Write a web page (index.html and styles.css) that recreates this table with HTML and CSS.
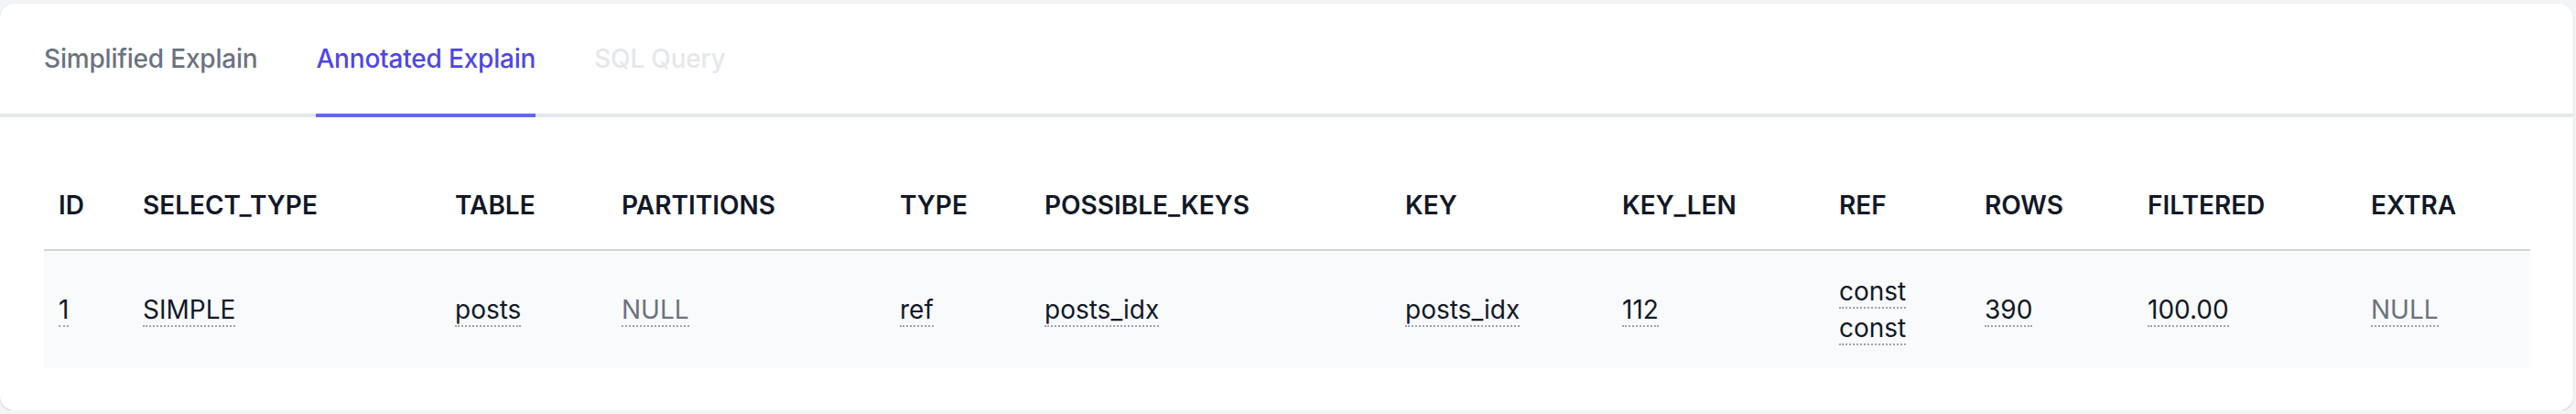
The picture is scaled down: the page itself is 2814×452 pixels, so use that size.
FILE: index.html
```html
<!DOCTYPE html>
<html lang="en">
<head>
<meta charset="utf-8">
<title>Explain</title>
<link rel="stylesheet" href="styles.css">
</head>
<body>
<div class="card">
  <div class="tabbar">
    <nav class="tabs">
      <a class="tab">Simplified Explain</a>
      <a class="tab active">Annotated Explain</a>
      <a class="tab disabled">SQL Query</a>
    </nav>
  </div>
  <div class="panel">
    <table class="explain">
      <colgroup>
        <col class="c-id"><col class="c-select"><col class="c-table"><col class="c-part">
        <col class="c-type"><col class="c-pkeys"><col class="c-key"><col class="c-keylen">
        <col class="c-ref"><col class="c-rows"><col class="c-filt"><col class="c-extra">
      </colgroup>
      <thead>
        <tr>
          <th>ID</th><th>SELECT_TYPE</th><th>TABLE</th><th>PARTITIONS</th>
          <th>TYPE</th><th>POSSIBLE_KEYS</th><th>KEY</th><th>KEY_LEN</th>
          <th>REF</th><th>ROWS</th><th>FILTERED</th><th>EXTRA</th>
        </tr>
      </thead>
      <tbody>
        <tr>
          <td><span class="val">1</span></td>
          <td><span class="val">SIMPLE</span></td>
          <td><span class="val">posts</span></td>
          <td><span class="val null">NULL</span></td>
          <td><span class="val">ref</span></td>
          <td><span class="val">posts_idx</span></td>
          <td><span class="val">posts_idx</span></td>
          <td><span class="val">112</span></td>
          <td><div class="line"><span class="val">const</span></div><div class="line"><span class="val">const</span></div></td>
          <td><span class="val">390</span></td>
          <td><span class="val">100.00</span></td>
          <td><span class="val null">NULL</span></td>
        </tr>
      </tbody>
    </table>
  </div>
</div>
</body>
</html>
```

FILE: styles.css
```css
html, body {
  margin: 0;
  padding: 0;
}
body {
  background: #f3f4f6;
  font-family: Inter, "Noto Sans", sans-serif;
  padding-top: 4px;
}
.card {
  width: 2811px;
  background: #ffffff;
  border-radius: 16px;
  box-shadow: 0 1px 3px rgba(0, 0, 0, 0.1), 0 1px 2px rgba(0, 0, 0, 0.06);
  overflow: hidden;
}
.tabbar {
  border-bottom: 4px solid #e5e7eb;
  padding: 0 48px;
}
.tabs {
  display: flex;
  gap: 64px;
  margin-bottom: -4px;
}
.tab {
  display: block;
  padding: 40px 0;
  font-size: 28px;
  line-height: 40px;
  font-weight: 500;
  letter-spacing: -0.2px;
  color: #6b7280;
  border-bottom: 4px solid transparent;
}
.tab.active {
  color: #4f46e5;
  border-bottom-color: #6366f1;
}
.tab.disabled {
  color: #e5e7eb;
}
.panel {
  padding: 48px 48px 46px;
}
.explain {
  width: 2716px;
  table-layout: fixed;
  border-collapse: collapse;
  font-size: 28px;
  line-height: 40px;
  color: #111827;
}
.c-id { width: 92px; }
.c-select { width: 341px; }
.c-table { width: 182px; }
.c-part { width: 304px; }
.c-type { width: 158px; }
.c-pkeys { width: 394px; }
.c-key { width: 237px; }
.c-keylen { width: 237px; }
.c-ref { width: 159px; }
.c-rows { width: 178px; }
.c-filt { width: 244px; }
.c-extra { width: 190px; }
.explain th {
  text-align: left;
  font-weight: 600;
  padding: 28px 16px;
  border-bottom: 2px solid #d1d5db;
}
.explain tbody tr {
  background: #f9fafb;
}
.explain td {
  padding: 24px 16px;
  vertical-align: middle;
  white-space: nowrap;
}
.val {
  border-bottom: 2px dotted #9ca3af;
}
.val.null {
  color: #6b7280;
}
.line {
  line-height: 40px;
}
```
